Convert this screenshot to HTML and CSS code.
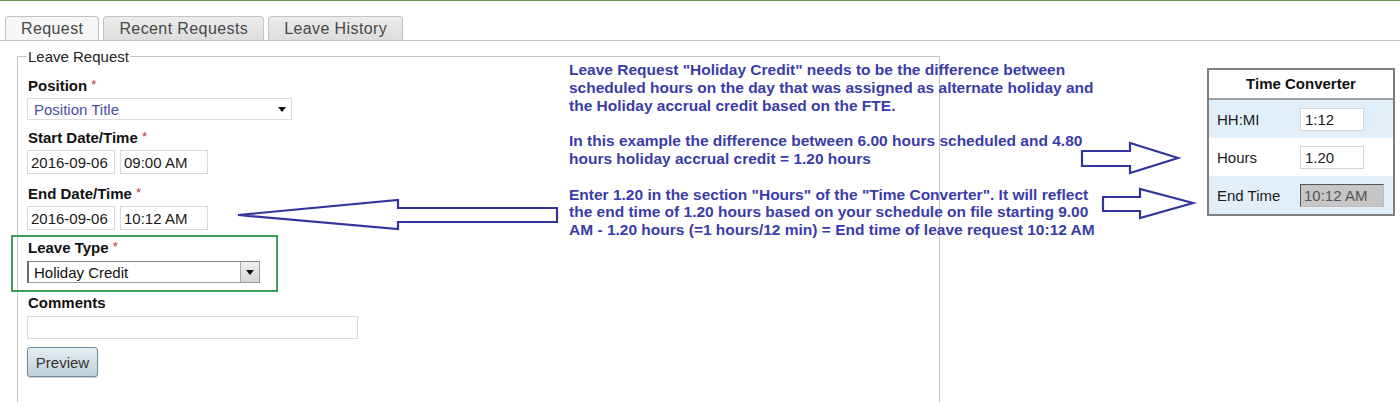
FILE: index.html
```html
<!DOCTYPE html>
<html lang="en">
<head>
<meta charset="utf-8">
<title>Leave Request</title>
<link rel="stylesheet" href="styles.css">
</head>
<body>
<div class="page">
  <div class="topline"></div>
  <nav class="tabs">
    <div class="tab active">Request</div>
    <div class="tab">Recent Requests</div>
    <div class="tab">Leave History</div>
  </nav>

  <div class="panel">
    <fieldset class="leave-form">
      <legend>Leave Request</legend>

      <label class="field-label first">Position <span class="req">*</span></label>
      <div class="select select-position">
        <span class="select-value">Position Title</span>
        <span class="caret"></span>
      </div>

      <label class="field-label gap-s">Start Date/Time <span class="req">*</span></label>
      <div class="date-row">
        <input class="text-input date" type="text" value="2016-09-06">
        <input class="text-input time" type="text" value="09:00 AM">
      </div>

      <label class="field-label gap-m">End Date/Time <span class="req">*</span></label>
      <div class="date-row">
        <input class="text-input date" type="text" value="2016-09-06">
        <input class="text-input time" type="text" value="10:12 AM">
      </div>

      <div class="highlight">
        <label class="field-label">Leave Type <span class="req">*</span></label>
        <div class="select select-type">
          <span class="select-value">Holiday Credit</span>
          <span class="select-btn"><span class="caret small"></span></span>
        </div>
      </div>

      <label class="field-label gap-xs">Comments</label>
      <input class="text-input comments" type="text" value="">

      <button class="preview-btn" type="button">Preview</button>
    </fieldset>

    <div class="converter">
      <div class="conv-head">Time Converter</div>
      <div class="conv-row shaded">
        <span class="conv-label">HH:MI</span>
        <input class="conv-input" type="text" value="1:12">
      </div>
      <div class="conv-row">
        <span class="conv-label">Hours</span>
        <input class="conv-input" type="text" value="1.20">
      </div>
      <div class="conv-row shaded">
        <span class="conv-label">End Time</span>
        <input class="conv-input disabled" type="text" value="10:12 AM" disabled>
      </div>
    </div>
  </div>

  <div class="note">
    <p>Leave Request "Holiday Credit" needs to be the difference between<br>scheduled hours on the day that was assigned as alternate holiday and<br>the Holiday accrual credit based on the FTE.</p>
    <p>In this example the difference between 6.00 hours scheduled and 4.80<br>hours holiday accrual credit = 1.20 hours</p>
    <p>Enter 1.20 in the section "Hours" of the "Time Converter". It will reflect<br>the end time of 1.20 hours based on your schedule on file starting 9.00<br>AM - 1.20 hours (=1 hours/12 min) = End time of leave request 10:12 AM</p>
  </div>

  <svg class="arrows" width="1400" height="402" viewBox="0 0 1400 402" aria-hidden="true">
    <polygon points="238,215 398,200 398,208 557,208 557,222 398,222 398,229"/>
    <polygon points="1082,151 1130,151 1130,143 1178,158 1130,173 1130,166 1082,166"/>
    <polygon points="1103,197 1140,197 1140,189 1193,203 1140,218 1140,211 1103,211"/>
  </svg>
</div>
</body>
</html>
```

FILE: styles.css
```css
html, body {
  margin: 0;
  padding: 0;
  overflow: hidden;
  background: #ffffff;
}

body {
  font-family: "Liberation Sans", Arial, sans-serif;
  color: #1a1a1a;
}

.page {
  position: relative;
  width: 1400px;
  height: 402px;
  overflow: hidden;
}

.topline {
  height: 1px;
  background: #679650;
}

/* Tabs */
.tabs {
  display: flex;
  gap: 4px;
  padding: 15px 0 0 5px;
  border-bottom: 1px solid #c6c6c6;
}

.tab {
  height: 23px;
  line-height: 23px;
  padding: 0 15px;
  border: 1px solid #c2c2c2;
  border-bottom: none;
  border-radius: 4px 4px 0 0;
  background: linear-gradient(#ececec, #dddddd);
  font-size: 16px;
  letter-spacing: 0.4px;
  color: #484848;
}

.tab.active {
  background: #f6f6f6;
}

/* Panel */
.panel {
  display: flex;
  align-items: flex-start;
  padding: 0 5px 0 17px;
}

.leave-form {
  box-sizing: border-box;
  width: 923px;
  height: 370px;
  margin: 7px 0 0 0;
  padding: 11px 9px;
  border: 1px solid #c4c4c4;
  min-width: 0;
}

.leave-form legend {
  padding: 0 1px;
  font-size: 15px;
  line-height: 17px;
  color: #222;
}

.field-label {
  display: block;
  font-size: 15px;
  font-weight: bold;
  line-height: 18px;
  color: #111;
  padding-left: 1px;
}

.field-label.gap-s { margin-top: 8px; }
.field-label.gap-m { margin-top: 10px; }
.field-label.gap-xs { margin-top: 2px; }

.req {
  color: #b83a3a;
  font-weight: normal;
  font-size: 13px;
  vertical-align: 2px;
}

.select {
  box-sizing: border-box;
  display: flex;
  align-items: center;
  justify-content: space-between;
  background: #fff;
  font-size: 15px;
}

.select-position {
  width: 265px;
  height: 22px;
  margin-top: 3px;
  padding: 0 5px 0 6px;
  border: 1px solid #dcdcdc;
  color: #4b4f9e;
}

.caret {
  width: 0;
  height: 0;
  border-left: 4px solid transparent;
  border-right: 4px solid transparent;
  border-top: 5px solid #111;
}

.date-row {
  display: flex;
  gap: 5px;
  margin-top: 3px;
}

.text-input {
  box-sizing: border-box;
  height: 24px;
  margin: 0;
  padding: 0 3px;
  border: 1px solid #dadada;
  font-family: "Liberation Sans", Arial, sans-serif;
  font-size: 15px;
  color: #1a1a1a;
  background: #fff;
  outline: none;
}

.text-input.date,
.text-input.time {
  width: 88px;
}

.text-input.comments {
  display: block;
  width: 331px;
  height: 23px;
  margin-top: 4px;
}

.highlight {
  box-sizing: border-box;
  width: 267px;
  margin: 5px 0 0 -16px;
  padding: 1px 14px 7px 14px;
  border: 2px solid #3ba05b;
}

.select-type {
  width: 233px;
  height: 22px;
  margin-top: 4px;
  padding-left: 5px;
  border: 1px solid #9a9a9a;
  border-left: 2px solid #6a6a6a;
  border-top-color: #888;
  color: #111;
}

.select-btn {
  box-sizing: border-box;
  display: flex;
  align-items: center;
  justify-content: center;
  width: 19px;
  height: 20px;
  border-left: 1px solid #a8a8a8;
  background: linear-gradient(#f0f0f0, #d6d6d6);
}

.preview-btn {
  display: block;
  box-sizing: border-box;
  width: 71px;
  height: 30px;
  margin-top: 8px;
  padding: 0;
  border: 1px solid #6f8c9b;
  border-radius: 3px;
  background: linear-gradient(#e6eef2, #bfd0d9);
  box-shadow: 0 1px 1px rgba(0, 0, 0, 0.2);
  font-family: "Liberation Sans", Arial, sans-serif;
  font-size: 15px;
  color: #333;
}

/* Time converter */
.converter {
  box-sizing: border-box;
  width: 188px;
  margin: 27px 0 0 auto;
  border: 2px solid #7f7f7f;
  background: #fff;
}

.conv-head {
  height: 28px;
  line-height: 28px;
  border-bottom: 2px solid #a0a0a0;
  text-align: center;
  font-size: 15px;
  font-weight: bold;
  color: #111;
}

.conv-row {
  display: grid;
  grid-template-columns: 83px auto;
  align-items: center;
  height: 38px;
  padding-left: 8px;
  font-size: 15px;
  color: #1a1a1a;
}

.conv-row.shaded {
  background: #e1effa;
}

.conv-input {
  box-sizing: border-box;
  width: 64px;
  height: 23px;
  margin: 0;
  padding: 0 4px;
  border: 1px solid #d6d6d6;
  background: #fff;
  font-family: "Liberation Sans", Arial, sans-serif;
  font-size: 15px;
  color: #1a1a1a;
}

.conv-input.disabled {
  width: 84px;
  padding-left: 3px;
  border: 1px solid;
  border-color: #555 #bdbdbd #bdbdbd #555;
  background: #c6c6c6;
  color: #555;
}

/* Annotation overlay */
.note {
  position: absolute;
  left: 569px;
  top: 61px;
  font-size: 15.5px;
  font-weight: bold;
  line-height: 17.8px;
  color: #3b3ca8;
  white-space: nowrap;
}

.note p {
  margin: 0 0 17.8px 0;
}

.arrows {
  position: absolute;
  left: 0;
  top: 0;
  pointer-events: none;
}

.arrows polygon {
  fill: none;
  stroke: #34359c;
  stroke-width: 2.2;
  stroke-linejoin: miter;
}
```
